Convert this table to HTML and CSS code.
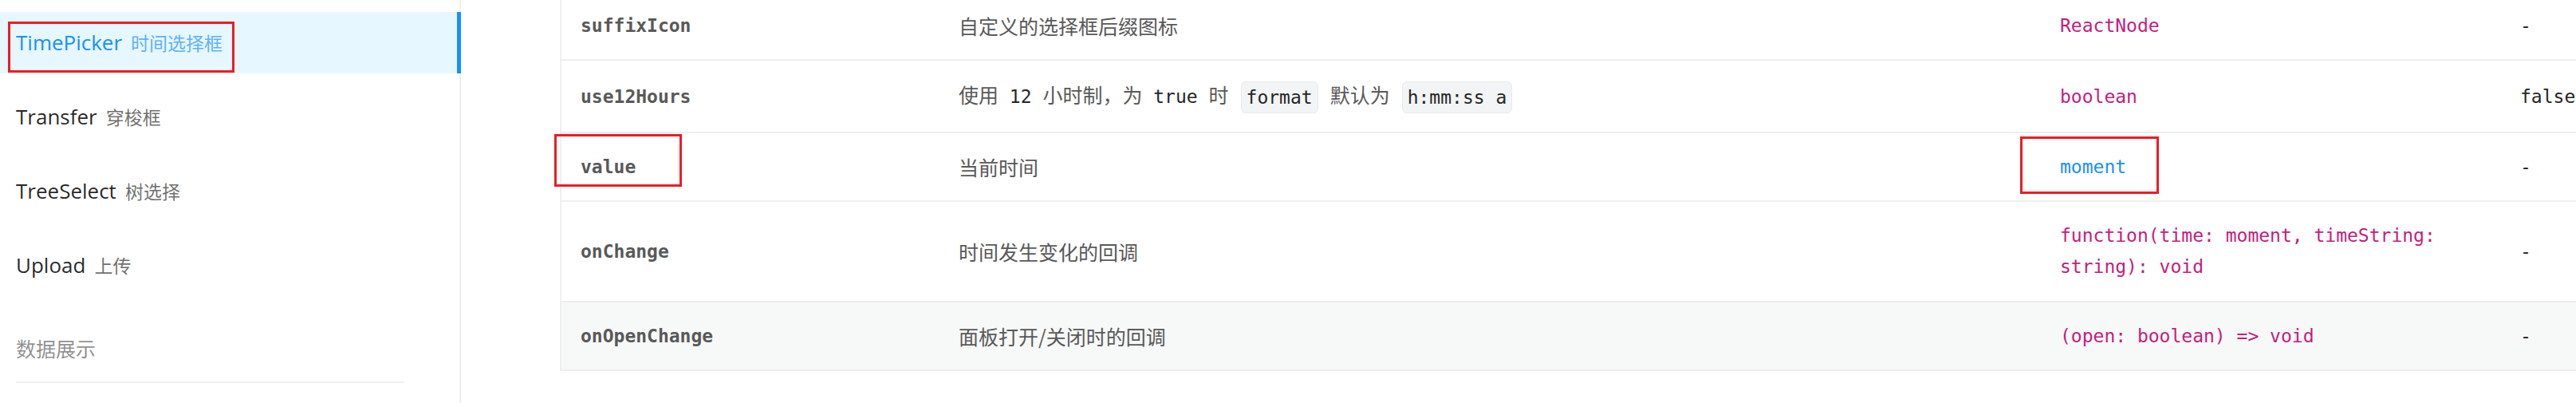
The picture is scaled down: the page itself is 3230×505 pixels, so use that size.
FILE: index.html
```html
<!DOCTYPE html>
<html lang="zh-CN">
<head>
    <meta charset="UTF-8">
    <meta name="viewport" content="width=device-width, initial-scale=1.0">
    <title>TimePicker 时间选择框</title>
    <link rel="stylesheet" href="styles.css">
</head>
<body>
    <div class="layout">
        <!-- Side navigation -->
        <aside class="sidebar">
            <ul class="menu">
                <li class="menu-item active">TimePicker<span class="cn">时间选择框</span></li>
                <li class="menu-item">Transfer<span class="cn">穿梭框</span></li>
                <li class="menu-item">TreeSelect<span class="cn">树选择</span></li>
                <li class="menu-item">Upload<span class="cn">上传</span></li>
            </ul>
            <div class="group-title">数据展示</div>
            <div class="divider"></div>
        </aside>

        <!-- API table -->
        <main class="content">
            <table class="api">
                <colgroup>
                    <col class="col-name">
                    <col class="col-desc">
                    <col class="col-type">
                    <col class="col-default">
                </colgroup>
                <tbody>
                    <tr>
                        <td class="name">suffixIcon</td>
                        <td class="desc">自定义的选择框后缀图标</td>
                        <td class="type">ReactNode</td>
                        <td class="default">-</td>
                    </tr>
                    <tr>
                        <td class="name">use12Hours</td>
                        <td class="desc">使用<span class="mono"> 12 </span>小时制，为<span class="mono"> true </span>时<code>format</code>默认为<code>h:mm:ss a</code></td>
                        <td class="type">boolean</td>
                        <td class="default">false</td>
                    </tr>
                    <tr>
                        <td class="name">value</td>
                        <td class="desc">当前时间</td>
                        <td class="type"><span class="link">moment</span></td>
                        <td class="default">-</td>
                    </tr>
                    <tr>
                        <td class="name">onChange</td>
                        <td class="desc">时间发生变化的回调</td>
                        <td class="type multi">function(time: moment, timeString: string): void</td>
                        <td class="default">-</td>
                    </tr>
                    <tr class="is-hover">
                        <td class="name">onOpenChange</td>
                        <td class="desc">面板打开/关闭时的回调</td>
                        <td class="type">(open: boolean) =&gt; void</td>
                        <td class="default">-</td>
                    </tr>
                </tbody>
            </table>
        </main>
    </div>

    <!-- annotation boxes drawn over the screenshot -->
    <div class="mark mark-menu"></div>
    <div class="mark mark-value"></div>
    <div class="mark mark-moment"></div>
</body>
</html>
```

FILE: styles.css
```css
body {
    margin: 0;
    width: 3230px;
    height: 505px;
    overflow: hidden;
    position: relative;
    background: #fff;
    font-family: "Open Sans", "Noto Sans CJK SC", sans-serif;
}
.layout {
    display: flex;
    height: 505px;
    overflow: hidden;
}

/* sidebar */
.sidebar {
    width: 576px;
    flex-shrink: 0;
    border-right: 2px solid #f0f0f0;
}
.menu {
    list-style: none;
    margin: 15px 0 0;
    padding: 0;
}
.menu-item {
    position: relative;
    height: 77px;
    line-height: 77px;
    margin-bottom: 16px;
    padding-left: 20px;
    font-size: 26px;
    color: rgba(0, 0, 0, 0.85);
    white-space: nowrap;
}
.menu-item .cn {
    margin-left: 11px;
    font-family: "Noto Sans CJK SC", sans-serif;
    font-size: 23px;
    opacity: 0.67;
}
.menu-item.active {
    background-color: #e6f7ff;
    color: #1890ff;
}
.menu-item.active::after {
    content: "";
    position: absolute;
    top: 0;
    right: -2px;
    width: 5px;
    height: 100%;
    background-color: #1890ff;
}
.group-title {
    margin-top: 45px;
    padding-left: 20px;
    height: 40px;
    line-height: 40px;
    font-family: "Noto Sans CJK SC", sans-serif;
    font-size: 25px;
    color: rgba(0, 0, 0, 0.45);
}
.divider {
    margin: 22px 0 0 20px;
    width: 487px;
    height: 2px;
    background-color: #f0f0f0;
}

/* api table */
.content {
    flex: 1;
    min-width: 0;
    padding-left: 124px;
}
.api {
    margin-top: -10px;
    width: 2834px;
    table-layout: fixed;
    border-collapse: separate;
    border-spacing: 0;
    border-left: 2px solid #efefef;
}
.col-name { width: 474px; }
.col-desc { width: 1381px; }
.col-type { width: 577px; }
.col-default { width: 400px; }
.api td {
    padding: 23px 24px;
    line-height: 38px;
    border-bottom: 2px solid #efefef;
    vertical-align: middle;
}
.api tr.is-hover td {
    background-color: #f7f8f8;
}
.name {
    font-family: "DejaVu Sans Mono", monospace;
    font-weight: bold;
    font-size: 23px;
    color: #595959;
}
.desc {
    font-family: "Noto Sans CJK SC", sans-serif;
    font-size: 25px;
    color: #595959;
    white-space: nowrap;
}
.desc .mono {
    font-family: "DejaVu Sans Mono", monospace;
    font-size: 23px;
    color: #262626;
    white-space: pre;
}
.desc code {
    display: inline-block;
    margin: 0 15px;
    padding: 0 6px;
    line-height: 38px;
    vertical-align: middle;
    font-family: "DejaVu Sans Mono", monospace;
    font-size: 23px;
    color: #262626;
    background-color: #f2f4f5;
    border: 1px solid #eaeaea;
    border-radius: 6px;
}
.type {
    font-family: "DejaVu Sans Mono", monospace;
    font-size: 23px;
    color: #c41d7f;
}
.type.multi {
    line-height: 39px;
}
.type .link {
    color: #1890ff;
}
.default {
    font-family: "DejaVu Sans Mono", monospace;
    font-size: 23px;
    color: #262626;
}

/* red annotation boxes */
.mark {
    position: absolute;
    border: 3px solid #ed1c24;
    box-sizing: border-box;
}
.mark-menu {
    left: 10px;
    top: 27px;
    width: 284px;
    height: 64px;
}
.mark-value {
    left: 695px;
    top: 168px;
    width: 160px;
    height: 66px;
}
.mark-moment {
    left: 2533px;
    top: 171px;
    width: 174px;
    height: 72px;
}
```
